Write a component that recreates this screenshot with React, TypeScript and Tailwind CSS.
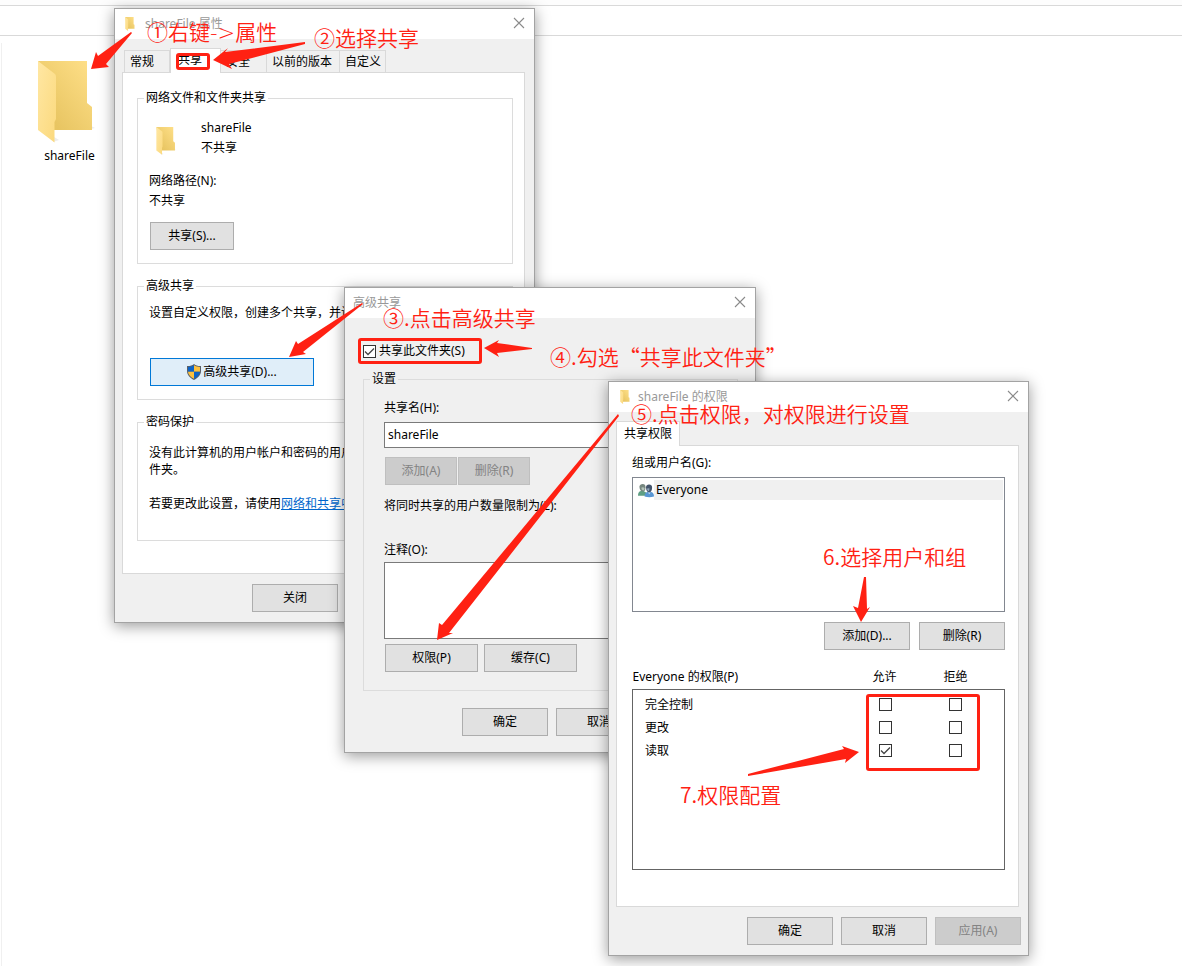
import type { ReactNode } from "react";
import clsx from "clsx";

const Folder = ({ id, className }: { id: string; className: string }) => (
  <svg viewBox="0 0 58 82" preserveAspectRatio="none" className={className} aria-hidden="true">
    <defs>
      <linearGradient id={`${id}-back`} x1="0" y1="1" x2="1" y2="0">
        <stop offset="0.2" stopColor="#e8c562" />
        <stop offset="1" stopColor="#ffe089" />
      </linearGradient>
      <linearGradient id={`${id}-flap`} x1="0" y1="0" x2="1" y2="1">
        <stop offset="0" stopColor="#ffe7a3" />
        <stop offset="1" stopColor="#fbd97d" />
      </linearGradient>
    </defs>
    <path d="M16 81 L22 79 L17 76 Z M54 68 L58 67 L54 65 Z" fill="#ececec" />
    <path d="M1 0 H50 V42 L55 46 V69 H12 Z" fill={`url(#${id}-back)`} />
    <path d="M1 0 L18 13 Q19 14 19 16 V58 L17.5 61 V81.5 L1 69 Z" fill={`url(#${id}-flap)`} />
  </svg>
);

const Shield = () => (
  <svg viewBox="0 0 14 16" className="h-4 w-3.5 shrink-0" aria-hidden="true">
    <path d="M7 0 C5 1.6 2.6 2.2 0 2 V7 C0 11 3 14 7 16 C11 14 14 11 14 7 V2 C11.400 2.200 9 1.600 7 0 Z" fill="#5a6068" />
    <path d="M7 1.300 C5 2.600 3.200 3 1 3 V7.700 H7 Z" fill="#0d63c6" />
    <path d="M7 1.300 C9 2.600 10.800 3 13 3 V7.700 H7 Z" fill="#fcc03d" />
    <path d="M1 7.700 H7 V14.800 C3.700 13 1.300 11 1 7.700 Z" fill="#fcc03d" />
    <path d="M13 7.700 H7 V14.800 C10.300 13 12.700 11 13 7.700 Z" fill="#0d63c6" />
  </svg>
);

const Users = () => (
  <svg viewBox="0 0 17 15" className="h-[15px] w-4 shrink-0" aria-hidden="true">
    <path d="M0 13 Q0 8.500 3 8 H6 L9 10 V13 Z" fill="#5f9f84" />
    <path d="M1.500 3.500 Q2 0.500 5 0.500 Q8 0.500 8 4 Q8 8.500 5 8.500 Q2 8.500 1.500 3.500 Z" fill="#76877f" />
    <path d="M3.500 4.500 Q5.500 3.500 7 5 Q6.800 7.500 5.500 7.500 Q3.700 7 3.500 4.500 Z" fill="#b4c4ba" />
    <path d="M7 14 Q7 9.500 10 9 H14 Q17 9.500 17 14 Q12 15.500 7 14 Z" fill="#5795d3" />
    <path d="M8.500 4 Q8.700 1 11.700 1 Q15 1 15 4.500 Q14.600 9.500 11.700 9.500 Q9 9.500 8.500 4 Z" fill="#44546c" />
    <path d="M9.500 5.500 Q11 5.500 12 4.500 Q12.500 7.500 11.300 8.300 Q9.700 8 9.500 5.500 Z" fill="#8fa6ba" />
    <path d="M10.500 9.500 L12 11.500 L13.500 9.500 Z" fill="#c4daf0" />
  </svg>
);

type WindowProps = {
  title: string;
  icon?: ReactNode;
  className: string;
  children: ReactNode;
};

const Window = ({ title, icon, className, children }: WindowProps) => (
  <section
    aria-label={title}
    className={clsx(
      "absolute border border-[#a3a3a3] bg-[#f0f0f0] shadow-[0_3px_14px_rgba(0,0,0,0.4)]",
      className
    )}
  >
    <header className="flex h-[30px] items-center bg-white pr-[7px]">
      {icon}
      <h2 className="grow text-[#999]">{title}</h2>
      <button type="button" aria-label="关闭窗口" className="p-0.5 pb-1">
        <svg viewBox="0 0 12 12" className="size-3" aria-hidden="true">
          <path d="M1 1 L11 11 M11 1 L1 11" stroke="#8a8a8a" strokeWidth="1.1" fill="none" />
        </svg>
      </button>
    </header>
    {children}
  </section>
);

type ButtonProps = {
  children: ReactNode;
  width?: string;
  disabled?: boolean;
  focused?: boolean;
};

const Button = ({ children, width = "w-[86px]", disabled, focused }: ButtonProps) => (
  <button
    type="button"
    disabled={disabled}
    className={clsx(
      "flex h-7 shrink-0 items-center justify-center gap-0.5 border",
      width,
      disabled && "border-[#bfbfbf] bg-[#ccc] text-[#838383]",
      focused && "border-[#0078d7] bg-[#e0eef9]",
      !disabled && !focused && "border-[#adadad] bg-[#e1e1e1]"
    )}
  >
    {children}
  </button>
);

type GroupProps = {
  title: string;
  className?: string;
  bodyClass: string;
  children: ReactNode;
};

const Group = ({ title, className, bodyClass, children }: GroupProps) => (
  <fieldset className={clsx("min-w-0 border border-[#dcdcdc]", className)}>
    <legend className="ml-1.5 px-0.5 leading-[18px]">{title}</legend>
    <div className={bodyClass}>{children}</div>
  </fieldset>
);

const Checkbox = ({ id, label, checked }: { id: string; label?: string; checked?: boolean }) => (
  <span className="relative block size-[13px] shrink-0">
    <input
      id={id}
      type="checkbox"
      aria-label={label}
      defaultChecked={checked}
      className="peer block size-[13px] appearance-none border border-[#333] bg-white"
    />
    <svg
      viewBox="0 0 13 13"
      className="pointer-events-none absolute inset-0 hidden size-[13px] peer-checked:block"
      aria-hidden="true"
    >
      <path d="M2 6.500 L5 9.500 L11 3.500" stroke="#444" strokeWidth="1.3" fill="none" />
    </svg>
  </span>
);

const tabs = [
  { name: "常规", style: "w-[46px] border-l" },
  { name: "共享", style: "" },
  { name: "安全", style: "w-[46px]" },
  { name: "以前的版本", style: "w-[73px]" },
  { name: "自定义", style: "w-[46px]" },
];

const PropertiesWindow = () => (
  <Window
    title="shareFile 属性"
    icon={<Folder id="props" className="mr-2.5 ml-2.5 h-3.5 w-2.5" />}
    className="top-2 left-[114px] w-[421px]"
  >
    <div className="pt-[9px] pr-[9px] pb-2.5 pl-[7px]">
      <div role="tablist" className="flex h-6 items-end pl-0.5">
        {tabs.map((tab) =>
          tab.name === "共享" ? (
            <button
              key={tab.name}
              type="button"
              role="tab"
              aria-selected="true"
              className="relative -mb-px h-[25px] w-[51px] border-x border-t border-[#d9d9d9] bg-white pb-0.5 pl-[7px] text-left"
            >
              {tab.name}
            </button>
          ) : (
            <button
              key={tab.name}
              type="button"
              role="tab"
              aria-selected="false"
              className={clsx("h-[22px] border-t border-r border-[#d9d9d9] pl-[5px] text-left whitespace-nowrap", tab.style)}
            >
              {tab.name}
            </button>
          )
        )}
      </div>
      <div role="tabpanel" className="border border-[#d9d9d9] bg-white pt-4 pr-[11px] pb-8 pl-3.5">
        <Group title="网络文件和文件夹共享" bodyClass="pr-3 pb-[13px] pl-[11px]">
          <div className="flex items-center pt-[11px] pl-[7px]">
            <Folder id="share" className="mt-1.5 mr-[25px] h-7 w-5" />
            <div>
              <p>shareFile</p>
              <p>不共享</p>
            </div>
          </div>
          <p className="mt-[13px]">网络路径(N):</p>
          <p className="mb-[11px]">不共享</p>
          <div className="pl-px">
            <Button width="w-[84px]">共享(S)...</Button>
          </div>
        </Group>

        <Group title="高级共享" className="mt-[13px]" bodyClass="pt-2 pr-3 pb-[13px] pl-[11px]">
          <p className="mb-[35px]">设置自定义权限，创建多个共享，并设置其他共享。</p>
          <div className="pl-px">
            <Button width="w-[164px]" focused>
              <Shield />
              高级共享(D)...
            </Button>
          </div>
        </Group>

        <Group title="密码保护" className="mt-[13px]" bodyClass="pt-[13px] pr-3 pb-7 pl-[11px] leading-[17px]">
          <p>
            没有此计算机的用户帐户和密码的用户可以访问共享文
            <br />
            件夹。
          </p>
          <p className="mt-[17px]">
            若要更改此设置，请使用
            <a href="#network" className="text-[#0066cc] underline">
              网络和共享中心
            </a>
            。
          </p>
        </Group>
      </div>
      <div className="mt-2.5 flex pl-[130px]">
        <Button>关闭</Button>
      </div>
    </div>
  </Window>
);

const AdvancedWindow = () => (
  <Window title="高级共享" icon={<span className="w-2" />} className="top-[287px] left-[344px] w-[412px]">
    <div className="pt-[23px] pr-[17px] pb-4 pl-[18px]">
      <div className="flex items-center gap-[3px]">
        <Checkbox id="share-folder" checked />
        <label htmlFor="share-folder">共享此文件夹(S)</label>
      </div>
      <Group title="设置" className="mt-[9px]" bodyClass="px-5 pt-2.5 pb-[18px]">
        <label htmlFor="share-name" className="mb-1 block">
          共享名(H):
        </label>
        <input
          id="share-name"
          defaultValue="shareFile"
          className="block h-[26px] w-full border border-[#7a7a7a] bg-white px-[3px] pb-0.5"
        />
        <div className="mt-[9px] flex gap-px pl-px">
          <Button width="w-[72px]" disabled>
            添加(A)
          </Button>
          <Button width="w-[72px]" disabled>
            删除(R)
          </Button>
        </div>
        <p className="mt-[11px]">将同时共享的用户数量限制为(L):</p>
        <label htmlFor="comment" className="mt-6 mb-0.5 block">
          注释(O):
        </label>
        <textarea id="comment" className="block h-[77px] w-full resize-none border border-[#7a7a7a] bg-white p-1" />
        <div className="mt-[5px] flex gap-1.5 pl-px">
          <Button width="w-[93px]">权限(P)</Button>
          <Button width="w-[93px]">缓存(C)</Button>
        </div>
      </Group>
      <div className="mt-[17px] flex gap-2 pl-[99px]">
        <Button>确定</Button>
        <Button>取消</Button>
      </div>
    </div>
  </Window>
);

const permissions = [
  { name: "完全控制", allow: false },
  { name: "更改", allow: false },
  { name: "读取", allow: true },
];

const PermissionsWindow = () => (
  <Window
    title="shareFile 的权限"
    icon={<Folder id="perm" className="mr-2 ml-[11px] h-3.5 w-2.5" />}
    className="top-[381px] left-[608px] w-[421px]"
  >
    <div className="pt-[9px] pr-[7px] pb-2.5 pl-[7px]">
      <div role="tablist" className="flex h-6">
        <button
          type="button"
          role="tab"
          aria-selected="true"
          className="relative h-[25px] w-16 border-x border-t border-[#d9d9d9] bg-white"
        >
          共享权限
        </button>
      </div>
      <div role="tabpanel" className="mr-0.5 border border-[#d9d9d9] bg-white pt-[7px] pr-[13px] pb-9 pl-[15px]">
        <p className="mb-1">组或用户名(G):</p>
        <ul className="h-[135px] border border-[#828790] py-0.5 pr-px pl-[5px]">
          <li className="flex items-center">
            <Users />
            <span className="h-5 grow bg-[#f0f0f0] pl-0.5">Everyone</span>
          </li>
        </ul>
        <div className="mt-2.5 flex justify-end gap-[9px]">
          <Button>添加(D)...</Button>
          <Button>删除(R)</Button>
        </div>
        <table className="mt-[17px] w-full table-fixed border-collapse">
          <thead>
            <tr className="h-[22px] align-top">
              <th className="text-left font-normal">Everyone 的权限(P)</th>
              <th className="w-11 font-normal">允许</th>
              <th className="w-[98px] font-normal">拒绝</th>
            </tr>
          </thead>
          <tbody className="border border-[#646464]">
            <tr className="h-1">
              <td colSpan={3} />
            </tr>
            {permissions.map((item, index) => (
              <tr key={item.name} className="h-[23px]">
                <td className="pl-3">{item.name}</td>
                <td className="pl-4">
                  <Checkbox id={`allow-${index}`} label={`允许${item.name}`} checked={item.allow} />
                </td>
                <td className="pl-[42px]">
                  <Checkbox id={`deny-${index}`} label={`拒绝${item.name}`} />
                </td>
              </tr>
            ))}
            <tr className="h-[107px]">
              <td colSpan={3} />
            </tr>
          </tbody>
        </table>
      </div>
      <div className="mt-2.5 flex justify-end gap-2">
        <Button>确定</Button>
        <Button>取消</Button>
        <Button disabled>应用(A)</Button>
      </div>
    </div>
  </Window>
);

// tip, barb, notch, tail, notch, barb
const arrows = [
  "91,69 96,52 98,56 131,32 132,33 106,64 109,67",
  "213,60 228,48 225,52 305,42 305,44 229,64 232,69",
  "289,357 296,341 298,344 362,303 363,304 303,352 306,354",
  "484,348 499,340 497,343 532,348 532,349 497,353 499,357",
  "437,640 439,623 442,625 618,414 619,416 449,633 453,633",
  "861,622 853,606 858,608 864,577 866,577 867,609 870,607",
  "859,752 842,746 844,749 748,774 748,776 846,759 845,763",
];

const Annotations = () => (
  <div className="pointer-events-none absolute inset-0 font-['Noto_Sans_CJK_SC','Noto_Sans',sans-serif] text-[21px] leading-7 font-[350] whitespace-nowrap text-[#ff2113]">
    <svg className="absolute inset-0 size-full" aria-hidden="true">
      {arrows.map((points) => (
        <polygon key={points} points={points} fill="#ff2113" />
      ))}
    </svg>
    <div className="absolute top-[53px] left-[176px] h-[17px] w-[34px] rounded-[3px] border-3 border-[#ff2113]" />
    <div className="absolute top-[338px] left-[358px] h-[26px] w-[124px] rounded-[3px] border-3 border-[#ff2113]" />
    <div className="absolute top-[694px] left-[866px] h-[77px] w-[114px] rounded-[3px] border-3 border-[#ff2113]" />
    <p className="absolute top-[17px] left-[147px]">
      ①右键<span className="font-['DejaVu_Sans',sans-serif]">-&gt;</span>属性
    </p>
    <p className="absolute top-[23px] left-[314px]">②选择共享</p>
    <p className="absolute top-[303px] left-[383px]">③.点击高级共享</p>
    <p className="absolute top-[342px] left-[550px]">④.勾选“共享此文件夹”</p>
    <p className="absolute top-[399px] left-[631px]">⑤.点击权限，对权限进行设置</p>
    <p className="absolute top-[542px] left-[823px]">6.选择用户和组</p>
    <p className="absolute top-[780px] left-[680px]">7.权限配置</p>
  </div>
);

export default function App() {
  return (
    <main className="relative flex min-h-screen flex-col overflow-hidden bg-white font-['Noto_Sans','Noto_Sans_CJK_SC',sans-serif] text-[12px] leading-5 text-black">
      <div className="h-1.5 border-b border-[#d9d9d9] bg-[#fdfdfd]" />
      <div className="h-[30px] border-b border-[#d9d9d9]" />
      <div className="mt-[7px] ml-px grow border-l border-[#f0f0f0] pt-[18px] pl-[35px]">
        <figure className="w-[65px]">
          <Folder id="desktop" className="h-[82px] w-[58px]" />
          <figcaption className="mt-[3px] text-center">shareFile</figcaption>
        </figure>
      </div>
      <PropertiesWindow />
      <AdvancedWindow />
      <PermissionsWindow />
      <Annotations />
    </main>
  );
}
